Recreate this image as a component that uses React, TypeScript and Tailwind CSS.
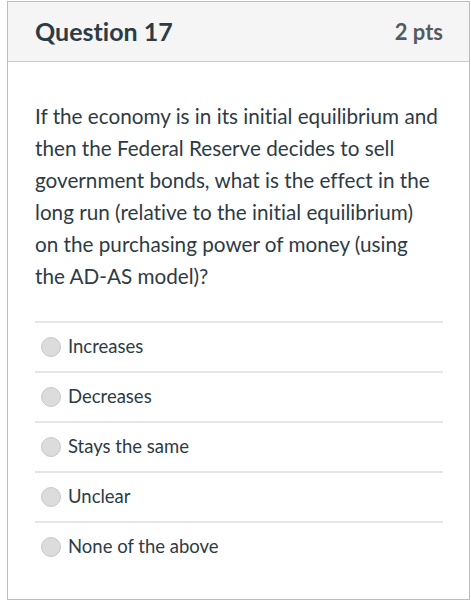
const answers = ["Increases", "Decreases", "Stays the same", "Unclear", "None of the above"];

export default function App() {
  return (
    <div className="w-[471px] h-[604px] bg-white pt-px pl-[7px] [font-variant-ligatures:none]" style={{ fontFamily: "Lato, 'Open Sans', sans-serif" }}>
      <div className="w-[463px] h-[599px] border border-[#b9bec2] text-[#2d3b45]">
        <div className="h-[60px] bg-[#f5f5f5] border-b border-[#c7cdd1] flex items-center justify-between pl-[27px] pr-[26px]">
          <span className="text-[25px] font-bold">Question 17</span>
          <span className="text-[22px] font-bold text-[#555a5e]">2 pts</span>
        </div>
        <div className="pl-[27px] pr-[24px] pt-[38px]">
          <p className="w-[406px] text-[20.7px] leading-[32px]">
            If the economy is in its initial equilibrium and then the Federal Reserve decides to sell government bonds, what is the effect in the long run (relative to the initial equilibrium) on the purchasing power of money (using the AD-AS model)?
          </p>
          <div className="mt-[29px] mr-[2px]">
            {answers.map((a) => (
              <div key={a} className="h-[50px] border-t-2 border-[#e3e5e7] flex items-center">
                <span className="w-[20px] h-[20px] rounded-full bg-[#dcdcdc] border border-[#c9c9c9] ml-[6px] mr-[7px]" />
                <span className="text-[18.5px]">{a}</span>
              </div>
            ))}
          </div>
        </div>
      </div>
    </div>
  );
}
